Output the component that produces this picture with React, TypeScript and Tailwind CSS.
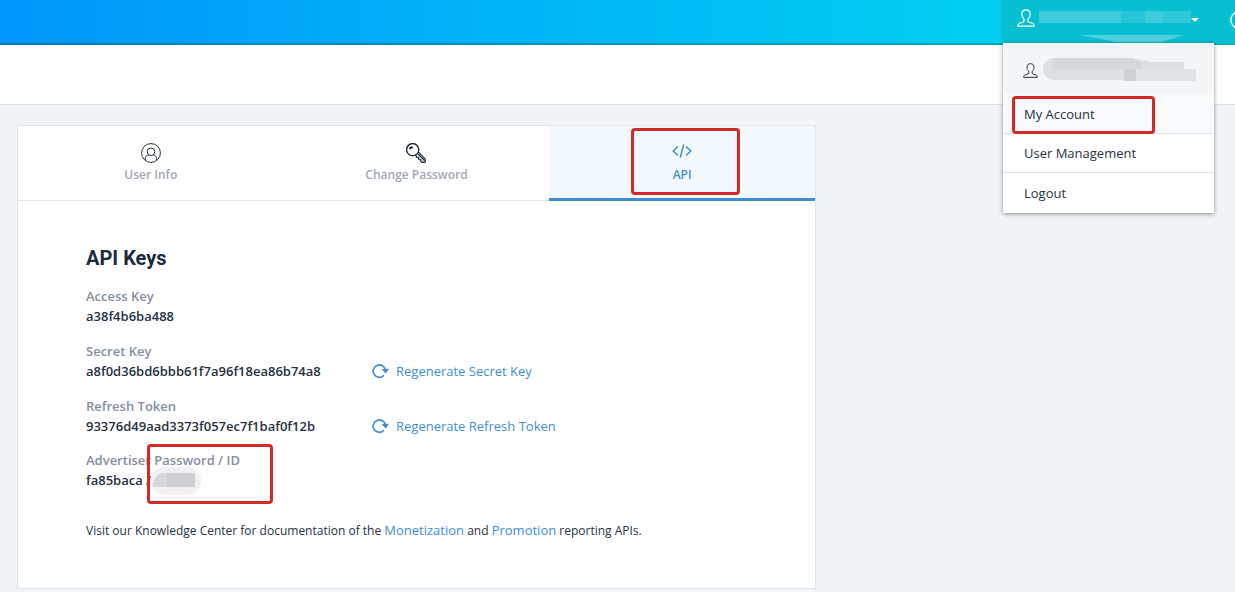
import React, { useState } from "react";

const tabs = [
  { id: "info", label: "User Info" },
  { id: "password", label: "Change Password" },
  { id: "api", label: "API" },
];

const keys = [
  { label: "Access Key", value: "a38f4b6ba488", action: "" },
  { label: "Secret Key", value: "a8f0d36bd6bbb61f7a96f18ea86b74a8", action: "Regenerate Secret Key" },
  { label: "Refresh Token", value: "93376d49aad3373f057ec7f1baf0f12b", action: "Regenerate Refresh Token" },
];

function PersonIcon({ className }: { className: string }) {
  return (
    <svg className={className} viewBox="0 0 18 18" fill="none" stroke="currentColor" strokeWidth="1.2" strokeLinejoin="round">
      <path d="M9 .8C6.5.8 4.8 2.5 4.8 5c0 2.200.8 4 2.200 5v2c0 .5-.3.9-.8 1.100L2.500 14.300C1.300 14.700.8 15.500.8 17.200h16.400c0-1.700-.5-2.500-1.700-2.900l-3.700-1.200c-.5-.2-.8-.6-.8-1.100v-2c1.400-1 2.200-2.800 2.200-5C13.200 2.500 11.500.8 9 .8Z" />
    </svg>
  );
}

function TabIcon({ id }: { id: string }) {
  if (id === "info") {
    return (
      <svg className="size-5 text-[#27303f]" viewBox="0 0 20 20" fill="none" stroke="currentColor" strokeWidth="1">
        <circle cx="10" cy="10" r="9.400" />
        <circle cx="10" cy="8.800" r="3.800" />
        <path d="M4.300 17.400v-1.600c0-2.200 1.300-3.500 3.700-4.100M15.700 17.400v-1.600c0-2.200-1.300-3.500-3.700-4.100" />
      </svg>
    );
  }
  if (id === "password") {
    return (
      <svg className="size-5 text-[#27303f]" viewBox="0 0 20 20" fill="none" stroke="currentColor" strokeWidth="1.200" strokeLinejoin="round">
        <path d="M12.300 8.800A6.100 6.100 0 1 0 8.800 12.300l1.300.4.500 1.600 1.600.3.400 1.600 1.600.4.400 1.500 1.400 1.200h2.800l.5-.5v-2.700Z" fill="#c9ccd6" />
        <circle cx="6.700" cy="6.700" r="6" fill="#fff" />
        <path d="m11.700 10.600 7 7" />
        <path d="M3.700 6a1.600 1.600 0 0 1 2.900-1.300M4.500 6.400a1.300 1.300 0 0 1 2.200-1.100" />
      </svg>
    );
  }
  return (
    <svg className="h-5 w-5 text-[#3f8ed2]" viewBox="0 0 20 20" fill="none" stroke="currentColor" strokeWidth="1.500">
      <path d="M6 3.500 1.200 8 6 12.500M14 3.500 18.800 8 14 12.500M11.700 1.500 8.300 14.500" />
    </svg>
  );
}

function RefreshIcon() {
  return (
    <svg className="h-4 w-[17px]" viewBox="0 0 17 16" fill="none" stroke="currentColor" strokeWidth="1.700">
      <path d="M12 12.300A6.200 6.200 0 1 1 13.500 7" />
      <path d="M9.500 6.300 17 5.800 13.900 10.600Z" fill="currentColor" stroke="none" />
    </svg>
  );
}

export default function Account() {
  const [tab, setTab] = useState("api");
  const [open, setOpen] = useState(true);

  return (
    <div className="min-h-screen overflow-x-hidden bg-[#f1f4f7] font-['Open_Sans',sans-serif] text-[13px] leading-5 text-[#273142]">
      <header className="flex h-[45px] justify-end overflow-hidden border-b-2 border-black/20 bg-linear-to-r from-[#0096fb] to-[#00dcec]">
        <button
          onClick={() => setOpen(!open)}
          aria-label="Account menu"
          className="relative flex w-[213px] items-start bg-[#06bfd0] pt-[9px] pl-4 text-white"
        >
          <PersonIcon className="h-[18px] w-[18px]" />
          <span className="mt-[2px] ml-1 flex h-3 w-[152px]">
            <span className="w-[82px] bg-[#3dcbdc]" />
            <span className="w-[24px] bg-[#27c5d7]" />
            <span className="w-[18px] bg-[#3dcbdc]" />
            <span className="w-[28px] bg-[#2fc8d9]" />
          </span>
          <span className="mt-[9px] border-x-4 border-t-4 border-x-transparent border-t-white" />
          <svg className="absolute top-[35px] left-[78px] h-[7px] w-[105px]" viewBox="0 0 105 7">
            <path d="M0 0h105L83 7H38Z" fill="#4fd0de" />
          </svg>
        </button>
        <button aria-label="Help" className="w-[21px] overflow-hidden bg-[#06bfd0] pl-4">
          <svg className="-mt-1 h-[18px] w-[18px]" viewBox="0 0 18 18" fill="none" stroke="#fff" strokeWidth="1.300">
            <circle cx="9" cy="9" r="8.200" />
          </svg>
        </button>
      </header>

      <div className="h-[60px] border-b border-[#dfe3e6] bg-white" />

      {open && (
        <nav className="absolute top-[43px] right-[21px] w-[211px] bg-white shadow-[0_1px_4px_rgba(0,0,0,0.45)]">
          <div className="flex h-[50px] items-center bg-[#f3f5f7] pt-1 pl-5">
            <PersonIcon className="h-[15px] w-[15px]" />
            <svg className="ml-1 h-[26px] w-[156px]" viewBox="0 0 156 26">
              <path d="M12 1h78l20 4h32v8h12v11H82v-1H12a11 11 0 0 1 0-22Z" fill="#dddfe3" />
              <path d="M10 1h80l10 5v6H10Z" fill="#d5d7dc" />
              <path d="M82 12h12v12H82Z" fill="#cfd1d6" />
              <path d="M94 12h60v12H94Z" fill="#e1e3e7" />
            </svg>
          </div>
          <a href="#account" className="relative flex h-[41px] items-center border-b border-[#dde2e6] bg-[#f9fafb] pt-px pl-[21px]">
            My Account
            <span className="absolute top-[3px] left-[9px] h-[38px] w-[143px] rounded-sm border-3 border-[#d42a25]" />
          </a>
          <a href="#users" className="flex h-[39px] items-center border-b border-[#dde2e6] pl-[21px]">
            User Management
          </a>
          <a href="#logout" className="flex h-10 items-center pl-[21px]">
            Logout
          </a>
        </nav>
      )}

      <main className="px-[17px] py-5">
        <section className="max-w-[799px] border border-[#dfe5ea] bg-white">
          <div className="grid h-[75px] grid-cols-3">
            {tabs.map((t) => (
              <button
                key={t.id}
                onClick={() => setTab(t.id)}
                className={
                  tab === t.id
                    ? "relative flex flex-col items-center border-b-3 border-[#3f8ed2] bg-[#f3f8fd] pt-[17px] text-xs leading-5 font-semibold text-[#4a8fd0]"
                    : "relative flex flex-col items-center border-b border-[#dfe5ea] pt-[17px] text-xs leading-5 font-semibold text-[#a2a8b3]"
                }
              >
                <TabIcon id={t.id} />
                <span className="mt-[2px]">{t.label}</span>
                {t.id === "api" && (
                  <span className="absolute top-[2px] left-[82px] h-[67px] w-[109px] rounded-sm border-3 border-[#d42a25]" />
                )}
              </button>
            ))}
          </div>

          <div className="px-[68px] pt-[43px] pb-[47px]">
            <h1 className="mb-[14px] font-[Roboto,sans-serif] text-xl leading-7 font-bold text-[#1c2a3e]">API Keys</h1>

            <dl>
              {keys.map((k) => (
                <div key={k.label} className="mb-[15px] last-of-type:mb-0">
                  <dt className="font-semibold text-[#838e9f]">{k.label}</dt>
                  <dd className="flex">
                    <span className="w-[286px] font-semibold">{k.value}</span>
                    {k.action && (
                      <button className="flex items-center gap-[7px] text-[#3f8ed2]">
                        <RefreshIcon />
                        {k.action}
                      </button>
                    )}
                  </dd>
                </div>
              ))}
              <div className="relative -mt-px">
                <dt className="font-semibold text-[#838e9f]">Advertiser Password / ID</dt>
                <dd className="font-semibold">fa85baca /</dd>
                <svg className="absolute top-[17px] left-[65px] h-[28px] w-[50px]" viewBox="0 0 50 28">
                  <rect width="50" height="28" rx="14" fill="#f3eff2" />
                  <path d="M14 6h30v14H2c0-8 4-14 12-14Z" fill="#d6d8dd" />
                  <path d="M16 6h28v14H16Z" fill="#cdcfd5" />
                </svg>
                <span className="absolute -top-[6px] left-[61px] h-[60px] w-[126px] rounded-sm border-3 border-[#d42a25]" />
              </div>
            </dl>

            <p className="mt-[30px] text-xs leading-5">
              Visit our Knowledge Center for documentation of the{" "}
              <a href="#monetization" className="text-[13px] text-[#3f8ed2]">Monetization</a> and{" "}
              <a href="#promotion" className="text-[13px] text-[#3f8ed2]">Promotion</a> reporting APIs.
            </p>
          </div>
        </section>
      </main>
    </div>
  );
}
